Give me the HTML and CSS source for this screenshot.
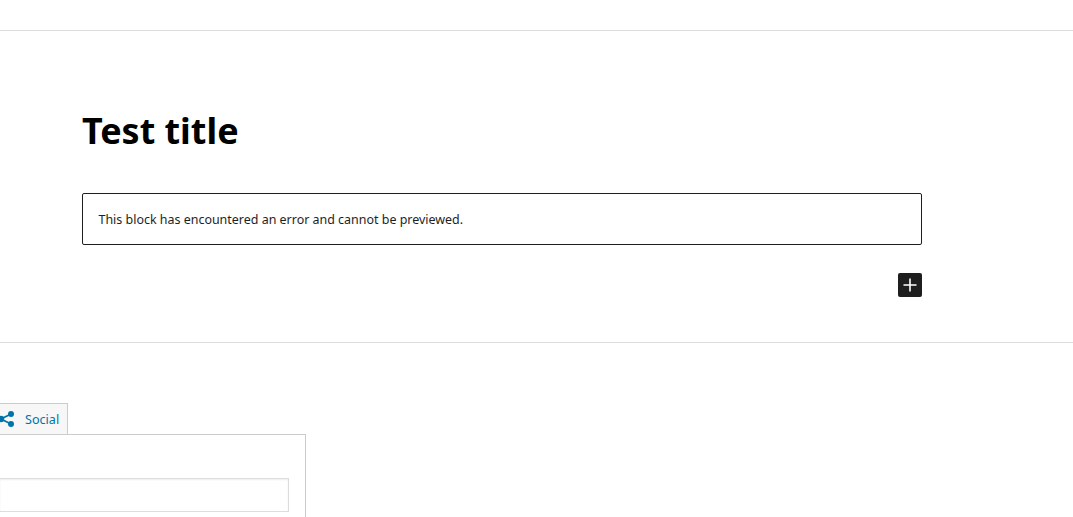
FILE: index.html
```html
<!DOCTYPE html>
<html>
	<head>
		<meta charset="utf-8">
		<title>Test title</title>
		<link rel="stylesheet" href="styles.css">
	</head>
	<body>
		<div class="topbar"></div>
		<div class="editor">
			<h1 class="post-title">Test title</h1>
			<div class="block-error">This block has encountered an error and cannot be previewed.</div>
			<div class="inserter">
				<button class="add-btn" type="button">
					<svg width="24" height="24" viewBox="0 0 24 24"><path d="M11.2 5.5h1.6v5.7h5.7v1.6h-5.7v5.7h-1.6v-5.7H5.5v-1.6h5.7z" fill="#fff"/></svg>
				</button>
			</div>
		</div>
		<div class="meta">
			<div class="tab">
				<svg class="share" width="20" height="20" viewBox="0 0 20 20">
					<path d="M15 5L5 10l10 5" fill="none" stroke="#0073aa" stroke-width="1.8"/>
					<circle cx="15" cy="5" r="3" fill="#0073aa"/>
					<circle cx="15" cy="15" r="3" fill="#0073aa"/>
					<circle cx="5" cy="10" r="3.2" fill="#0073aa"/>
				</svg>
				<span>Social</span>
			</div>
			<div class="panel">
				<div class="field"></div>
			</div>
		</div>
	</body>
</html>
```

FILE: styles.css
```css
* {
	box-sizing: border-box;
	padding: 0;
	margin: 0;
}
html, body {
	width: 100%;
	height: 100%;
	overflow: hidden;
}
body {
	background: #fff;
	font-family: "Noto Sans", "Open Sans", sans-serif;
}
.topbar {
	height: 31px;
	border-bottom: 1px solid #ddd;
}
.editor {
	height: 312px;
	padding: 79px 151px 0 82px;
	border-bottom: 1px solid #ddd;
}
.post-title {
	height: 42px;
	font-size: 35.9px;
	line-height: 42px;
	font-weight: 700;
	color: #000;
}
.block-error {
	height: 52px;
	margin-top: 41px;
	padding: 0 15.5px;
	border: 1px solid #1e1e1e;
	border-radius: 2px;
	font-size: 12.46px;
	line-height: 51px;
	color: #1e1e1e;
}
.inserter {
	display: flex;
	justify-content: flex-end;
	margin-top: 28px;
}
.add-btn {
	display: flex;
	width: 24px;
	height: 24px;
	border: 0;
	border-radius: 2px;
	background: #1e1e1e;
}
.meta {
	margin-top: 60px;
	width: 306px;
}
.tab {
	display: flex;
	align-items: center;
	gap: 9px;
	width: 68px;
	height: 32px;
	margin-bottom: -1px;
	border: 1px solid #ccc;
	border-left: 0;
	background: #f7f7f7;
	font-size: 12.6px;
	color: #0073aa;
}
.share {
	margin-left: -4px;
}
.panel {
	height: 90px;
	padding: 43px 16px 0 0;
	border: 1px solid #ccc;
	border-left: 0;
	background: #fff;
}
.field {
	height: 34px;
	border: 1px solid #ddd;
	border-left: 0;
	background: #fff;
	box-shadow: inset 0 1px 2px rgba(0, 0, 0, 0.07);
}
```
